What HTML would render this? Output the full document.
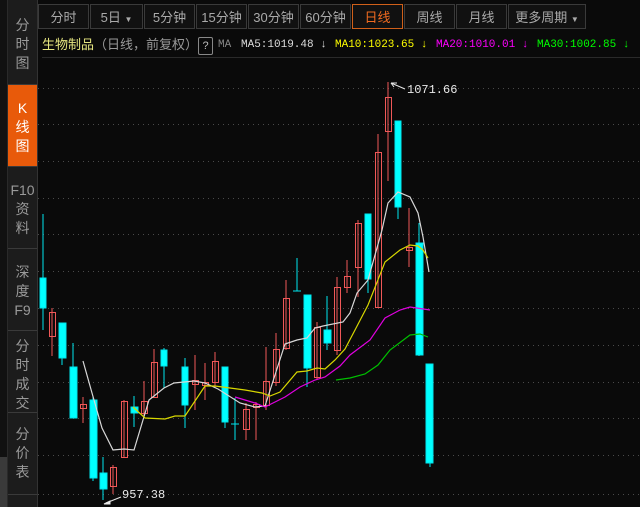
<!DOCTYPE html>
<html><head><meta charset="utf-8"><style>
body{margin:0;width:640px;height:507px;background:#0a0a0a;overflow:hidden;position:relative;font-family:"Liberation Sans","Noto Sans CJK SC",sans-serif}
.strip{position:absolute;left:0;top:0;width:7px;height:507px;background:#111}
.strip2{position:absolute;left:0;top:457px;width:7px;height:50px;background:#3a3a3a}
.side{position:absolute;left:7px;top:0;width:29px;height:507px;background:#1c1c1c;border-left:1px solid #2a2a2a;border-right:1px solid #333}
.si{position:absolute;left:0;width:29px;border-bottom:1px solid #3a3a3a;color:#9a9a9a;font-size:14px;line-height:19px;text-align:center;box-sizing:border-box;padding-top:14px}
.si.on{background:#e85a0a;color:#fff}
.tb{position:absolute;top:4px;height:25px;border:1px solid #3a3a3a;background:#111;color:#aaa;font-size:13px;line-height:25px;text-align:center;box-sizing:border-box}
.tb.on{border-color:#d0601a;color:#f06a20}
.info{position:absolute;top:36px;font-size:13px;white-space:nowrap;line-height:18px}
.m{position:absolute;top:37px;font-family:"Liberation Mono",monospace;font-size:11px;line-height:16px;white-space:nowrap}
</style></head><body>
<div class="strip"></div><div class="strip2"></div>
<div class="side">
<div class="si" style="top:0;height:85px;padding-top:16px">分<br>时<br>图</div>
<div class="si on" style="top:85px;height:82px">K<br>线<br>图</div>
<div class="si" style="top:167px;height:82px">F10<br>资<br>料</div>
<div class="si" style="top:249px;height:82px">深<br>度<br>F9</div>
<div class="si" style="top:331px;height:82px;padding-top:6px">分<br>时<br>成<br>交</div>
<div class="si" style="top:413px;height:82px;padding-top:12px">分<br>价<br>表</div>
</div>
<div class="tb" style="left:38px;width:51px">分时</div>
<div class="tb" style="left:90px;width:53px">5日 <span style="font-size:8px">▼</span></div>
<div class="tb" style="left:144px;width:51px">5分钟</div>
<div class="tb" style="left:196px;width:51px">15分钟</div>
<div class="tb" style="left:248px;width:51px">30分钟</div>
<div class="tb" style="left:300px;width:51px">60分钟</div>
<div class="tb on" style="left:352px;width:51px">日线</div>
<div class="tb" style="left:404px;width:51px">周线</div>
<div class="tb" style="left:456px;width:51px">月线</div>
<div class="tb" style="left:508px;width:78px">更多周期 <span style="font-size:8px">▼</span></div>
<div class="info" style="left:42px"><span style="color:#e6e680">生物制品</span><span style="color:#999">（日线，前复权）</span></div>
<div style="position:absolute;left:198px;top:37px;width:13px;height:16px;border:1px solid #888;border-radius:2px;color:#bbb;font-size:11px;line-height:16px;text-align:center">?</div>
<span class="m" style="left:218px;color:#888">MA</span>
<span class="m" style="left:241px;color:#ddd">MA5:1019.48 ↓</span>
<span class="m" style="left:335px;color:#ffff00">MA10:1023.65 ↓</span>
<span class="m" style="left:436px;color:#ff00ff">MA20:1010.01 ↓</span>
<span class="m" style="left:537px;color:#00ff00">MA30:1002.85 ↓</span>
<div style="position:absolute;left:42px;top:57px;width:598px;height:1px;background:#2a2a2a"></div>
<svg style="position:absolute;left:0;top:0" width="640" height="507">
<g stroke="#4a4a4a" stroke-dasharray="1,4">
<line x1="38" x2="640" y1="88.5" y2="88.5"/><line x1="38" x2="640" y1="124.5" y2="124.5"/><line x1="38" x2="640" y1="161.5" y2="161.5"/><line x1="38" x2="640" y1="198.5" y2="198.5"/><line x1="38" x2="640" y1="234.5" y2="234.5"/><line x1="38" x2="640" y1="271.5" y2="271.5"/><line x1="38" x2="640" y1="308.5" y2="308.5"/><line x1="38" x2="640" y1="345.5" y2="345.5"/><line x1="38" x2="640" y1="382.5" y2="382.5"/><line x1="38" x2="640" y1="418.5" y2="418.5"/><line x1="38" x2="640" y1="455.5" y2="455.5"/><line x1="38" x2="640" y1="494.5" y2="494.5"/>
</g>
<g stroke="#00e5ee" fill="#00ffff">
<line x1="43" x2="43" y1="214" y2="330"/><rect x="40" y="278" width="6" height="30"/>
<line x1="62" x2="62" y1="323" y2="365"/><rect x="59" y="323" width="7" height="35"/>
<line x1="73" x2="73" y1="343" y2="418"/><rect x="70" y="367" width="7" height="51"/>
<line x1="93" x2="93" y1="397" y2="481"/><rect x="90" y="400" width="7" height="78"/>
<line x1="103" x2="103" y1="457" y2="500"/><rect x="100" y="473" width="7" height="16"/>
<line x1="134" x2="134" y1="396" y2="427"/><rect x="131" y="407" width="7" height="6"/>
<line x1="164" x2="164" y1="348" y2="388"/><rect x="161" y="350" width="6" height="16"/>
<line x1="185" x2="185" y1="358" y2="428"/><rect x="182" y="367" width="6" height="38"/>
<line x1="225" x2="225" y1="367" y2="428"/><rect x="222" y="367" width="6" height="55"/>
<line x1="235" x2="235" y1="398" y2="440"/><line x1="231" x2="239" y1="424" y2="424"/>
<line x1="297" x2="297" y1="258" y2="291"/><line x1="293" x2="301" y1="291" y2="291"/>
<line x1="307" x2="307" y1="295" y2="387"/><rect x="304" y="295" width="7" height="73"/>
<line x1="327" x2="327" y1="296" y2="350"/><rect x="324" y="330" width="7" height="13"/>
<line x1="368" x2="368" y1="214" y2="293"/><rect x="365" y="214" width="6" height="65"/>
<line x1="398" x2="398" y1="121" y2="219"/><rect x="395" y="121" width="6" height="86"/>
<line x1="419" x2="419" y1="223" y2="356"/><rect x="416" y="243" width="7" height="112"/>
<line x1="430" x2="430" y1="364" y2="467"/><rect x="426" y="364" width="7" height="99"/>
</g>
<g stroke="#f05858" fill="none">
<line x1="52" x2="52" y1="308" y2="356"/><rect x="49.5" y="312.5" width="6" height="24"/>
<line x1="83" x2="83" y1="397" y2="423"/><rect x="80.5" y="404.5" width="6" height="4"/>
<line x1="113" x2="113" y1="465" y2="494"/><rect x="110.5" y="467.5" width="6" height="19"/>
<line x1="124" x2="124" y1="400" y2="457"/><rect x="121.5" y="401.5" width="6" height="56"/>
<line x1="144" x2="144" y1="381" y2="417"/><rect x="141.5" y="401.5" width="6" height="12"/>
<line x1="154" x2="154" y1="349" y2="397"/><rect x="151.5" y="362.5" width="6" height="35"/>
<line x1="195" x2="195" y1="355" y2="410"/><rect x="192.5" y="380.5" width="6" height="4"/>
<line x1="205" x2="205" y1="363" y2="400"/><rect x="202.5" y="382.5" width="6" height="3"/>
<line x1="215" x2="215" y1="352" y2="388"/><rect x="212.5" y="361.5" width="6" height="21"/>
<line x1="246" x2="246" y1="403" y2="440"/><rect x="243.5" y="409.5" width="6" height="20"/>
<line x1="256" x2="256" y1="402" y2="440"/><rect x="253.5" y="404.5" width="6" height="3"/>
<line x1="266" x2="266" y1="347" y2="410"/><rect x="263.5" y="381.5" width="6" height="24"/>
<line x1="276" x2="276" y1="333" y2="386"/><rect x="273.5" y="349.5" width="6" height="33"/>
<line x1="286" x2="286" y1="280" y2="350"/><rect x="283.5" y="298.5" width="6" height="50"/>
<line x1="317" x2="317" y1="322" y2="380"/><rect x="314.5" y="327.5" width="6" height="50"/>
<line x1="337" x2="337" y1="277" y2="355"/><rect x="334.5" y="287.5" width="6" height="63"/>
<line x1="347" x2="347" y1="260" y2="293"/><rect x="344.5" y="276.5" width="6" height="11"/>
<line x1="358" x2="358" y1="220" y2="297"/><rect x="355.5" y="223.5" width="6" height="44"/>
<line x1="378" x2="378" y1="134" y2="307"/><rect x="375.5" y="152.5" width="6" height="155"/>
<line x1="388" x2="388" y1="82" y2="181"/><rect x="385.5" y="97.5" width="6" height="34"/>
<line x1="409" x2="409" y1="208" y2="267"/><rect x="406.5" y="247.5" width="6" height="3"/>
</g>
<g fill="none" stroke-width="1.2">
<polyline stroke="#d8d8d8" points="83,361 92,393 102,428 113,450 124,449 134,450 149,400 164,388 174,383 194,381 205,383 218,389 240,403 255,407 265,406 285,344 297,340 307,338 315,328 323,326 343,322 350,313 357,293 368,280 382,230 388,203 398,192 410,197 418,213 423,237 429,272"/>
<polyline stroke="#d8d800" points="133,407 145,418 165,419 175,416 185,416 205,386 215,386 245,390 262,393 270,396 280,392 297,372 307,371 317,368 325,369 335,360 345,349 355,330 368,305 385,262 400,250 410,245 418,246 423,250 428,258"/>
<polyline stroke="#e000e0" points="235,397 255,403 265,407 285,397 300,387 315,380 325,377 340,366 350,355 370,340 385,318 400,310 410,307 430,310"/>
<polyline stroke="#00c000" points="336,380 350,378 365,374 378,365 390,350 410,335 420,334 428,337"/>
</g>
<g fill="#e8e8e8" font-family="Liberation Mono,monospace" font-size="12">
<text x="407" y="93">1071.66</text><text x="122" y="498">957.38</text>
</g>
<g stroke="#e8e8e8" fill="none"><path d="M391 83 L405 89"/><path d="M391 83 l6 0 M391 83 l3 4"/><path d="M106 503 L121 497"/><path d="M104 504 l6 -3 l0 3z" fill="#e8e8e8"/></g>
</svg>
</body></html>
